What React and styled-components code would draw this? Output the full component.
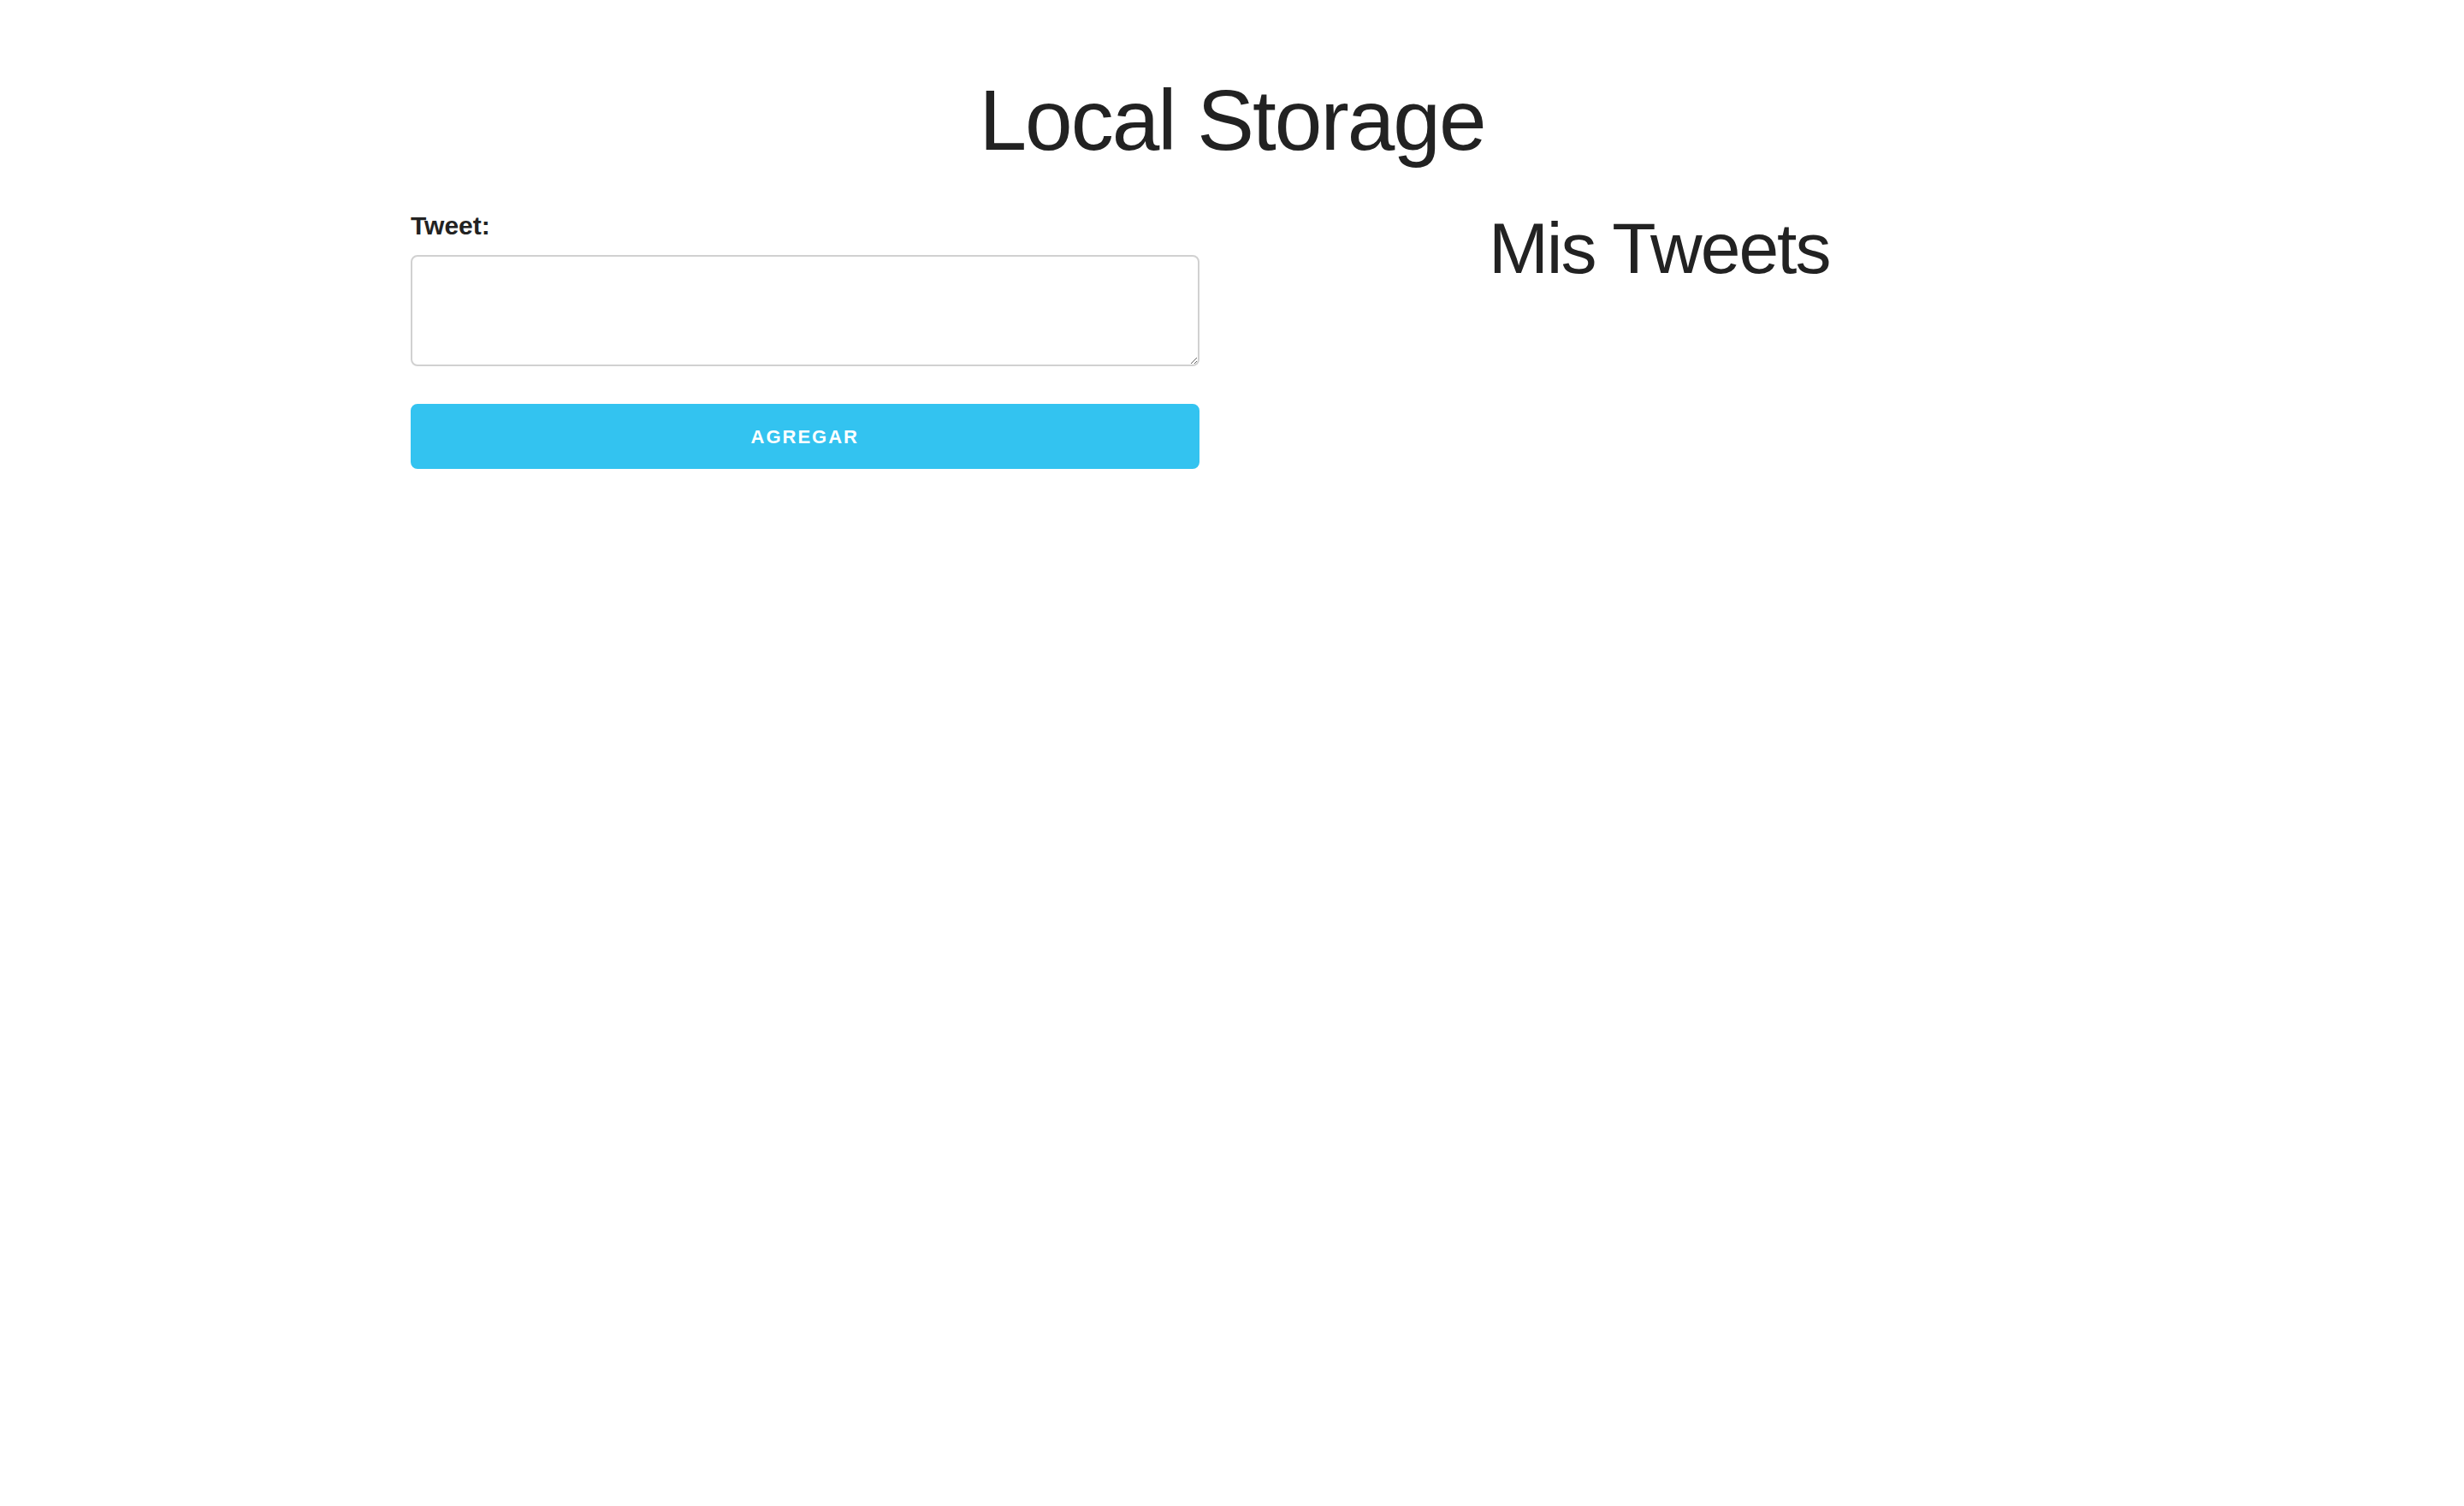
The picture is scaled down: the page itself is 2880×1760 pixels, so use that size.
import React, { useState } from 'react';
import styled, { createGlobalStyle } from 'styled-components';

const GlobalStyle = createGlobalStyle`
	html, body {
		margin: 0;
		padding: 0;
		background: #fff;
	}
	body {
		font-family: "Liberation Sans", Arial, Helvetica, sans-serif;
		color: #222;
		font-size: 30px;
		line-height: 1.6;
	}
	*, *::before, *::after {
		box-sizing: border-box;
	}
`;

const App = () => {
	const [tweet, setTweet] = useState('');
	const [tweets, setTweets] = useState([]);

	const addTweet = (e) => {
		e.preventDefault();
		if (!tweet.trim()) return;
		setTweets([...tweets, tweet]);
		setTweet('');
	};

	return (
		<>
			<GlobalStyle />
			<Container>
				<Title>Local Storage</Title>
				<Row>
					<Column>
						<form onSubmit={addTweet}>
							<Label htmlFor="tweet">Tweet:</Label>
							<TextArea
								id="tweet"
								value={tweet}
								onChange={(e) => setTweet(e.target.value)}
							/>
							<Button type="submit">Agregar</Button>
						</form>
					</Column>
					<Column>
						<SubTitle>Mis Tweets</SubTitle>
						<TweetList>
							{tweets.map((item, index) => (
								<li key={index}>{item}</li>
							))}
						</TweetList>
					</Column>
				</Row>
			</Container>
		</>
	);
};

export default App;

const Container = styled.div`
	width: 100%;
	max-width: 1920px;
	margin: 0 auto;
	padding-top: 80px;
`;

const Title = styled.h1`
	margin: 0 0 40px;
	font-size: 100px;
	font-weight: 300;
	line-height: 1.2;
	letter-spacing: -2px;
	text-align: center;
	color: #222;
`;

const Row = styled.div`
	display: grid;
	grid-template-columns: 48% 48%;
	column-gap: 4%;
`;

const Column = styled.div`
	min-width: 0;
`;

const Label = styled.label`
	display: block;
	margin-bottom: 10px;
	font-weight: 700;
	font-size: 30px;
	line-height: 48px;
	color: #222;
`;

const TextArea = styled.textarea`
	display: block;
	width: 100%;
	min-height: 130px;
	height: 130px;
	margin: 0 0 44px;
	padding: 12px 20px;
	border: 2px solid #d1d1d1;
	border-radius: 8px;
	background: #fff;
	font-family: inherit;
	font-size: 30px;
	box-shadow: none;
	outline: none;
`;

const Button = styled.button`
	display: block;
	width: 100%;
	height: 76px;
	padding: 2px 60px 0;
	border: 2px solid #33c3f0;
	border-radius: 8px;
	background: #33c3f0;
	color: #fff;
	font-family: inherit;
	font-size: 22px;
	font-weight: 700;
	letter-spacing: 2px;
	text-transform: uppercase;
	line-height: 70px;
	cursor: pointer;
`;

const SubTitle = styled.h2`
	margin: -2px 0 40px;
	font-size: 84px;
	font-weight: 300;
	line-height: 1.25;
	letter-spacing: -2px;
	text-align: center;
	color: #222;
`;

const TweetList = styled.ul`
	margin: 0;
	padding: 0;
	list-style: none;
`;
